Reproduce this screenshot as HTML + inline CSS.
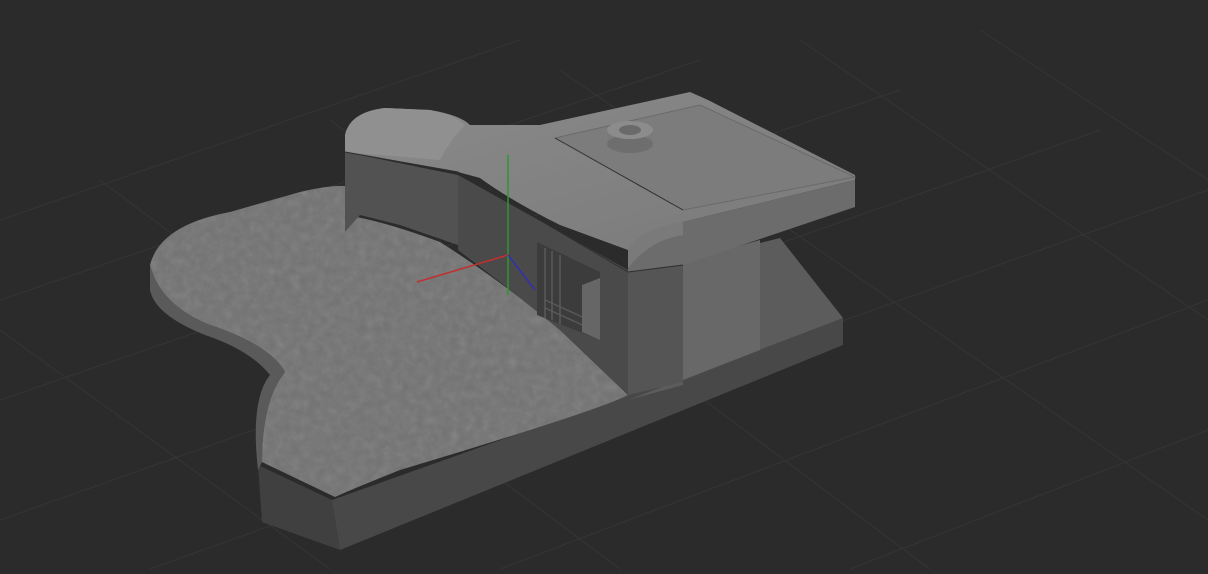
<!DOCTYPE html>
<html><head><meta charset="utf-8"><style>html,body{margin:0;padding:0;background:#2b2b2b;overflow:hidden}</style></head>
<body>
<svg width="1208" height="569" viewBox="0 0 1208 569" xmlns="http://www.w3.org/2000/svg">
<defs>
<linearGradient id="roof" x1="0" y1="0" x2="1" y2="1"><stop offset="0" stop-color="#8a8a8a"/><stop offset="1" stop-color="#7a7a7a"/></linearGradient>
<filter id="noise"><feTurbulence type="fractalNoise" baseFrequency="0.12" numOctaves="3" seed="4"/><feColorMatrix type="saturate" values="0"/><feComponentTransfer><feFuncA type="table" tableValues="0 0.18"/></feComponentTransfer><feComposite in2="SourceGraphic" operator="in"/></filter>
</defs>
<rect width="1208" height="569" fill="#2b2b2b"/>
<g stroke="#353535" stroke-width="1">
<line x1="0" y1="220" x2="520" y2="40"/><line x1="0" y1="300" x2="700" y2="60"/>
<line x1="0" y1="400" x2="900" y2="90"/><line x1="0" y1="520" x2="1100" y2="130"/>
<line x1="150" y1="569" x2="1208" y2="190"/><line x1="500" y1="569" x2="1208" y2="300"/>
<line x1="850" y1="569" x2="1208" y2="430"/>
<line x1="0" y1="330" x2="330" y2="569"/><line x1="100" y1="180" x2="620" y2="569"/>
<line x1="330" y1="120" x2="930" y2="569"/><line x1="560" y1="70" x2="1208" y2="520"/>
<line x1="800" y1="40" x2="1208" y2="320"/><line x1="980" y1="30" x2="1208" y2="180"/>
</g>
<!-- slab -->
<polygon points="258,465 332,500 340,550 262,522" fill="#404040"/>
<polygon points="332,500 843,318 843,345 340,550" fill="#484848"/>
<polygon points="683,262 780,238 843,318 628,400 683,385" fill="#5c5c5c"/>
<polygon points="683,262 760,240 760,350 683,380" fill="#686868"/>
<!-- terrain -->
<path d="M150,265 Q160,225 230,212 L300,192 Q330,185 345,186 L345,215 Q380,220 440,242 Q500,280 560,330 L628,395 Q600,410 400,470 Q350,490 335,497 L262,462 Q262,400 285,372 Q270,345 210,325 Q160,305 150,265 Z" fill="#727272"/>
<path d="M150,265 Q160,225 230,212 L300,192 Q330,185 345,186 L345,215 Q380,220 440,242 Q500,280 560,330 L628,395 Q600,410 400,470 Q350,490 335,497 L262,462 Q262,400 285,372 Q270,345 210,325 Q160,305 150,265 Z" fill="#fff" filter="url(#noise)"/>
<path d="M150,265 Q160,305 210,325 Q270,345 285,372 Q262,400 262,462 L258,470 Q250,400 270,375 Q250,350 205,335 Q155,315 150,290 Z" fill="#5a5a5a"/>
<!-- building walls -->
<polygon points="345,152 458,175 458,245 400,225 360,215 345,232" fill="#525252"/>
<polygon points="458,175 628,270 628,395 560,330 500,282 458,250" fill="#4a4a4a"/>
<polygon points="628,270 683,262 683,382 628,395" fill="#555"/>
<polygon points="537,242 600,272 600,340 537,315" fill="#3c3c3c"/>
<g stroke="#5a5a5a" stroke-width="1.5"><line x1="545" y1="248" x2="545" y2="318"/><line x1="552" y1="251" x2="552" y2="320"/><line x1="560" y1="255" x2="560" y2="324"/><line x1="545" y1="300" x2="600" y2="325"/><line x1="545" y1="308" x2="600" y2="333"/></g>
<polygon points="582,285 600,278 600,340 582,332" fill="#666"/>
<!-- roof -->
<path d="M345,152 L345,135 Q350,112 385,108 L430,110 Q460,115 470,125 L540,125 L690,92 L708,100 L855,175 L855,180 L683,222 Q640,235 628,250 L560,225 Q510,200 480,178 L458,172 Z" fill="url(#roof)"/>
<path d="M345,135 Q350,112 385,108 L430,110 Q455,115 465,125 Q450,140 440,160 L345,152 Z" fill="#909090"/>
<polygon points="555,138 700,105 855,177 683,210 " fill="#7c7c7c" stroke="#6a6a6a" stroke-width="1"/>
<line x1="555" y1="138" x2="683" y2="210" stroke="#333" stroke-width="1"/>
<polygon points="628,250 683,222 855,180 855,207 683,265 628,272" fill="#6c6c6c"/>
<path d="M628,250 Q640,228 683,222 L683,235 Q650,240 628,268 Z" fill="#7a7a7a"/>
<line x1="345" y1="152" x2="458" y2="172" stroke="#2e2e2e"/>
<line x1="458" y1="172" x2="628" y2="272" stroke="#2e2e2e"/>
<line x1="628" y1="272" x2="683" y2="265" stroke="#2e2e2e"/>
<!-- hatch -->
<rect x="607" y="128" width="46" height="16" fill="#7a7a7a"/>
<ellipse cx="630" cy="144" rx="23" ry="9" fill="#6e6e6e"/>
<ellipse cx="630" cy="130" rx="23" ry="9" fill="#8c8c8c"/>
<ellipse cx="630" cy="130" rx="11" ry="5" fill="#6a6a6a"/>
<!-- axes -->
<line x1="508" y1="155" x2="508" y2="295" stroke="#2a9a2a" stroke-width="1.5"/>
<line x1="508" y1="255" x2="417" y2="282" stroke="#c03030" stroke-width="1.5"/>
<line x1="508" y1="255" x2="535" y2="290" stroke="#3030b0" stroke-width="1.5"/>
</svg>
</body></html>
